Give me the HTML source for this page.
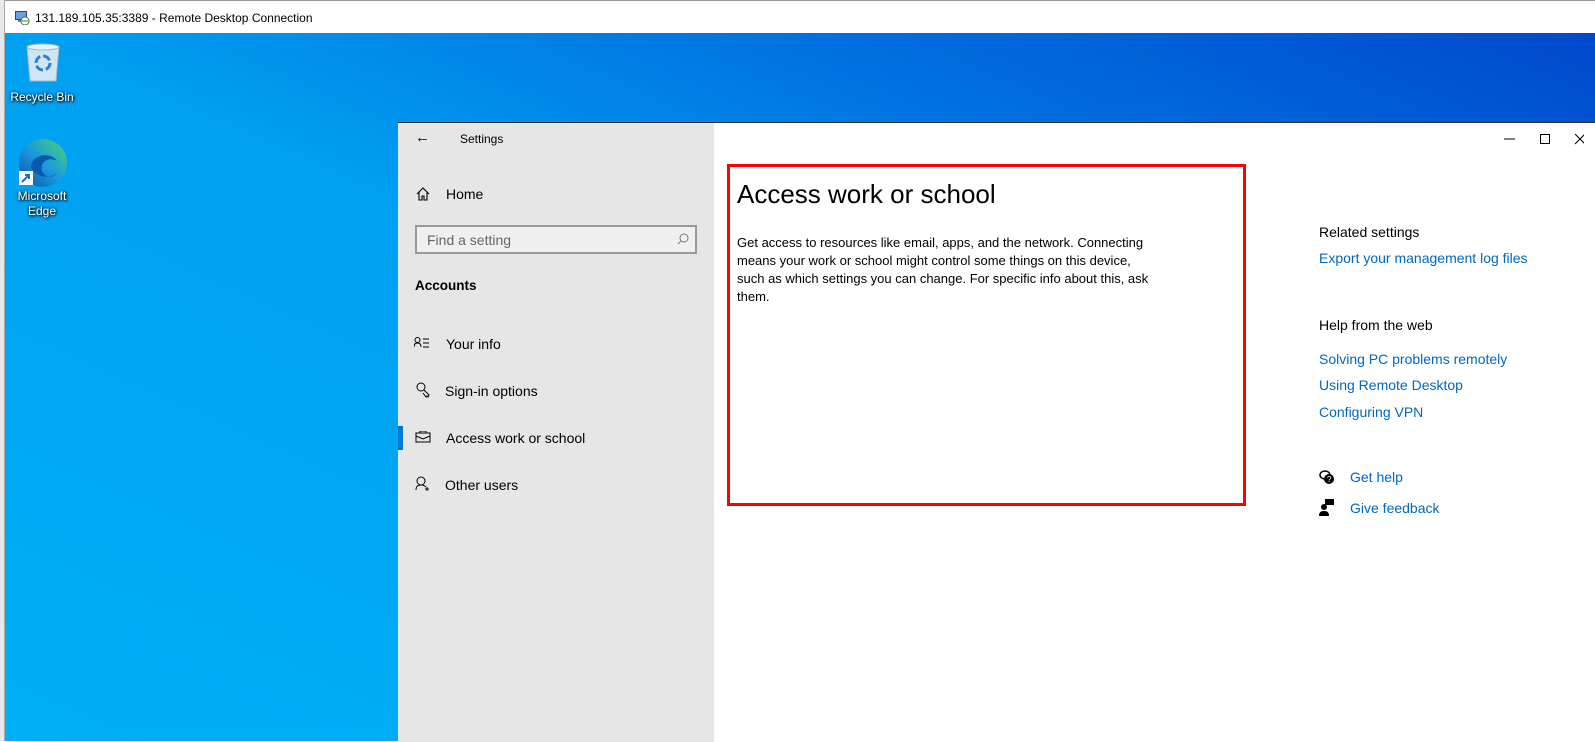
<!DOCTYPE html>
<html><head><meta charset="utf-8"><style>
*{margin:0;padding:0;box-sizing:border-box}
body{width:1595px;height:741px;overflow:hidden;position:relative;background:#fff;font-family:"Liberation Sans",sans-serif;color:#000}
.abs{position:absolute}
#strip{left:0;top:0;width:5px;height:741px;background:#e8e8e8;border-right:1px solid #aaa}
#title{left:5px;top:0;width:1590px;height:33px;background:#fff;border-top:1px solid #999}
#title span{position:absolute;left:30px;top:10px;font-size:12px;color:#000}
#desk{left:5px;top:33px;width:1590px;height:708px;background:linear-gradient(to left bottom,#0048cc 0%,#0070e0 25%,#00a0f0 50%,#00b0f6 100%)}
.dlabel{color:#fff;font-size:12px;text-align:center;text-shadow:0 0 3px #000,1px 1px 2px #000;width:80px}
#win{left:398px;top:122px;width:1197px;height:619px;background:#fff;border-top:1px solid #333}
#side{left:0;top:0;width:316px;height:619px;background:#e6e6e6}
.t{position:absolute;font-size:14px;white-space:nowrap}
.link{color:#0067c0}
</style></head><body>
<div id="strip" class="abs"></div>
<div id="title" class="abs">
<svg class="abs" style="left:9px;top:10px" width="16" height="14"><rect x="1" y="0" width="12" height="9" fill="#2a3f8f"/><rect x="2" y="1" width="10" height="7" fill="#6aa0e0"/><rect x="4" y="9" width="6" height="2" fill="#777"/><circle cx="11" cy="10" r="4" fill="#fff" stroke="#3a7a3a"/><path d="M8 10h6" stroke="#3a7a3a"/></svg>
<span>131.189.105.35:3389 - Remote Desktop Connection</span></div>
<div id="desk" class="abs">
<svg class="abs" style="left:18px;top:8px" width="40" height="42"><path d="M4 6h32l-3 34H7z" fill="#cfe6f5" stroke="#9fb8c8"/><ellipse cx="20" cy="6" rx="16" ry="3" fill="#e6f3fb" stroke="#9fb8c8"/><circle cx="20" cy="22" r="7" fill="none" stroke="#2d7fd0" stroke-width="3" stroke-dasharray="8 3"/></svg>
<div class="abs dlabel" style="left:-3px;top:57px">Recycle Bin</div>
<svg class="abs" style="left:12px;top:104px" width="52" height="52"><defs><linearGradient id="e" x1="1" y1="0" x2="0" y2="1"><stop offset="0" stop-color="#4fd46a"/><stop offset=".5" stop-color="#1a9be0"/><stop offset="1" stop-color="#0b4fa8"/></linearGradient></defs><circle cx="26" cy="26" r="24" fill="url(#e)"/><path d="M14 30a14 12 0 0 1 26-6a9 7 0 0 0-14 2a8 8 0 0 0 14 10a16 14 0 0 1-26-6z" fill="#0a58b0"/><rect x="2" y="34" width="14" height="14" fill="#fff"/><path d="M5 45l7-7M8 38h4v4" stroke="#2a6bc0" stroke-width="2" fill="none"/></svg>
<div class="abs dlabel" style="left:-3px;top:156px;line-height:15px">Microsoft<br>Edge</div>
</div>
<div id="win" class="abs">
<div id="side" class="abs">
<div class="t" style="left:17px;top:6px;font-size:15px">←</div>
<div class="t" style="left:62px;top:9px;font-size:12px">Settings</div>
<svg class="abs" style="left:18px;top:64px" width="14" height="14"><path d="M1 7L7 1l6 6M3 5v8h3v-4h2v4h3V5" fill="none" stroke="#000" stroke-width="1.1"/></svg>
<div class="t" style="left:48px;top:63px">Home</div>
<div class="abs" style="left:17px;top:102px;width:282px;height:29px;border:2px solid #999;background:#f0f0f0"></div>
<div class="t" style="left:29px;top:109px;color:#666">Find a setting</div>
<svg class="abs" style="left:279px;top:110px" width="12" height="12"><circle cx="7" cy="5" r="4" fill="none" stroke="#777"/><path d="M4 8L1 11" stroke="#777"/></svg>
<div class="t" style="left:17px;top:155px;font-weight:bold;font-size:13.5px">Accounts</div>
<svg class="abs" style="left:16px;top:214px" width="16" height="12"><circle cx="3.5" cy="3" r="2.5" fill="none" stroke="#000"/><path d="M0 10c0-3 1.5-4 3.5-4s3.5 1 3.5 4M9 2h6M9 6h6M9 10h6" fill="none" stroke="#000"/></svg>
<div class="t" style="left:48px;top:213px">Your info</div>
<svg class="abs" style="left:18px;top:259px" width="15" height="16"><circle cx="5" cy="5" r="4" fill="none" stroke="#000"/><path d="M8 8l5 5-1 2-1-1-1 1-3-4" fill="none" stroke="#000"/></svg>
<div class="t" style="left:47px;top:260px">Sign-in options</div>
<div class="abs" style="left:0;top:303px;width:5px;height:24px;background:#0078d7"></div>
<svg class="abs" style="left:17px;top:308px" width="16" height="12"><rect x="1" y="2" width="14" height="9" fill="none" stroke="#000"/><path d="M5 2V0h6v2M1 5l7 3 7-3" fill="none" stroke="#000"/></svg>
<div class="t" style="left:48px;top:307px">Access work or school</div>
<svg class="abs" style="left:17px;top:353px" width="16" height="16"><circle cx="6" cy="5" r="4" fill="none" stroke="#000"/><path d="M1 14c0-4 2-5 5-5s4 1 5 2M12 11v4M10 13h4" fill="none" stroke="#000"/></svg>
<div class="t" style="left:47px;top:354px">Other users</div>
</div>
<svg class="abs" style="left:1106px;top:10px" width="80" height="14"><path d="M0 6h11" stroke="#000"/><rect x="36.5" y="1.5" width="9" height="9" fill="none" stroke="#000"/><path d="M71 1l10 10M81 1l-10 10" stroke="#000"/></svg>
<div class="abs" style="left:329px;top:41px;width:519px;height:342px;border:3px solid #f00"></div>
<div class="t" style="left:339px;top:56px;font-size:26px;font-weight:300">Access work or school</div>
<div class="t" style="left:339px;top:111px;font-size:13px;line-height:18px">Get access to resources like email, apps, and the network. Connecting<br>means your work or school might control some things on this device,<br>such as which settings you can change. For specific info about this, ask<br>them.</div>
<div class="t" style="left:921px;top:101px">Related settings</div>
<div class="t link" style="left:921px;top:127px">Export your management log files</div>
<div class="t" style="left:921px;top:194px">Help from the web</div>
<div class="t link" style="left:921px;top:228px">Solving PC problems remotely</div>
<div class="t link" style="left:921px;top:254px">Using Remote Desktop</div>
<div class="t link" style="left:921px;top:281px">Configuring VPN</div>
<svg class="abs" style="left:921px;top:346px" width="16" height="16"><ellipse cx="6" cy="6" rx="5" ry="4" fill="none" stroke="#000" stroke-width="1.5"/><circle cx="10" cy="10" r="5" fill="#000"/><text x="8" y="13" font-size="8" fill="#fff" font-family="Liberation Sans">?</text></svg>
<div class="t link" style="left:952px;top:346px">Get help</div>
<svg class="abs" style="left:921px;top:376px" width="16" height="17"><rect x="6" y="0" width="9" height="6" fill="#000"/><circle cx="5" cy="8" r="3" fill="#000"/><path d="M0 17c0-4 2-5 5-5s5 1 5 5z" fill="#000"/></svg>
<div class="t link" style="left:952px;top:377px">Give feedback</div>
</div>
</body></html>
